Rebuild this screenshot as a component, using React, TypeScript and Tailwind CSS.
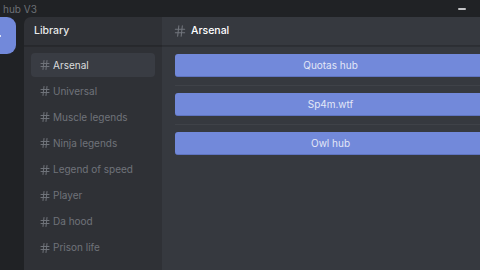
import { Hash } from 'lucide-react';

const channels = [
  'Arsenal',
  'Universal',
  'Muscle legends',
  'Ninja legends',
  'Legend of speed',
  'Player',
  'Da hood',
  'Prison life',
];

const scripts = ['Quotas hub', 'Sp4m.wtf', 'Owl hub'];

export default function App() {
  return (
    <div
      className="w-[480px] h-[270px] overflow-hidden bg-[#202225] flex flex-col"
      style={{ fontFamily: 'Inter, "Open Sans", sans-serif' }}
    >
      {/* title bar */}
      <div className="h-[17px] shrink-0 flex items-center justify-between pl-[3px] pr-[14px]">
        <span className="text-[10px] text-[#6c7076] leading-none">hub V3</span>
        <div className="w-[8px] h-[2px] bg-[#c4c5c7] rounded-sm" />
      </div>

      <div className="flex flex-1 min-h-0">
        {/* server column */}
        <div className="w-[24px] shrink-0">
          <div className="-ml-[20px] w-[36px] h-[37px] rounded-[9px] bg-[#7289da] flex items-center justify-end pr-[15px]">
            <div className="w-[2px] h-[2px] bg-white rounded-full" />
          </div>
        </div>

        {/* channel sidebar */}
        <div className="w-[138px] shrink-0 bg-[#2f3136] rounded-tl-[7px] flex flex-col">
          <div className="h-[29px] shrink-0 flex items-center pl-[10px] border-b border-[#26282c] shadow-[0_1px_0_rgba(0,0,0,0.15)]">
            <span className="text-[10.5px] font-medium text-[#e8e9ea]">Library</span>
          </div>
          <div className="flex flex-col px-[7px] pt-[7px] gap-[2.15px]">
            {channels.map((c, i) => (
              <div
                key={c}
                className={
                  'h-[24px] flex items-center pl-[8px] gap-[2px] rounded-[4px] ' +
                  (i === 0 ? 'bg-[#393c43] text-[#dcddde]' : 'text-[#6f737a]')
                }
              >
                <Hash size={12} strokeWidth={2} className="text-[#6f737a]" />
                <span className="text-[10px]">{c}</span>
              </div>
            ))}
          </div>
        </div>

        {/* main */}
        <div className="flex-1 bg-[#36393f] flex flex-col min-w-0">
          <div className="h-[29px] shrink-0 flex items-center pl-[11px] gap-[4px] border-b border-[#2c2e33] shadow-[0_1px_0_rgba(0,0,0,0.15)]">
            <Hash size={14} strokeWidth={1.8} className="text-[#72767d]" />
            <span className="text-[10.5px] font-medium text-[#ffffff]">Arsenal</span>
          </div>
          <div className="flex flex-col pl-[13px] pt-[8px] -mr-[6px]">
            {scripts.map((s, i) => (
              <div key={s} className="flex flex-col">
                {i > 0 && <div className="h-px bg-[#3f4248] my-[7.5px]" />}
                <div className="h-[23px] rounded-[3px] bg-[#7289da] border-b border-[#5f74c0] flex items-center justify-center text-[10px] text-[#e3e7f7]">
                  {s}
                </div>
              </div>
            ))}
          </div>
        </div>
      </div>
    </div>
  );
}
